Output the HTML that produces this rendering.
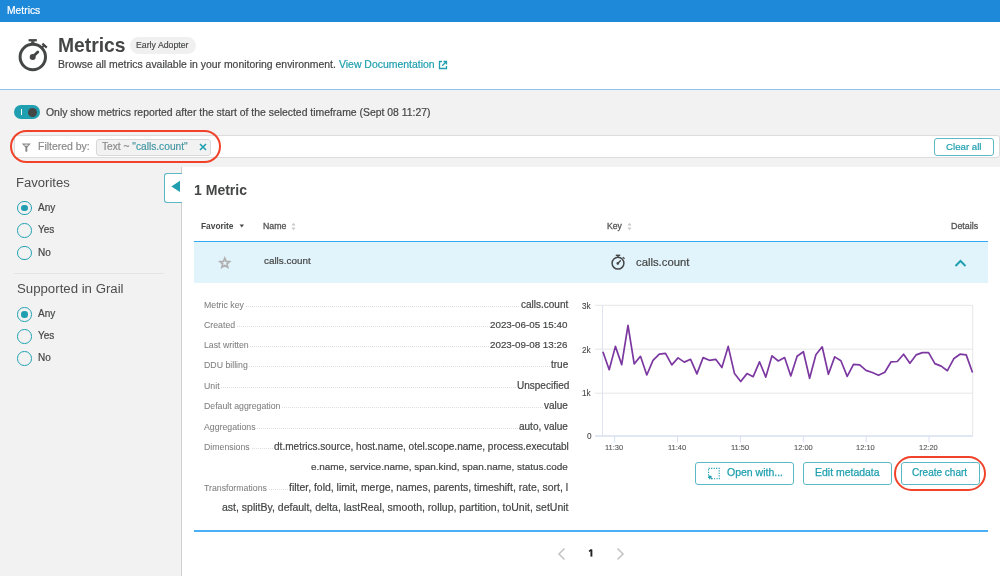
<!DOCTYPE html>
<html><head><meta charset="utf-8"><style>
html,body{margin:0;padding:0;width:1000px;height:576px;overflow:hidden;background:#f2f2f2;position:relative}
body{font-family:"Liberation Sans", sans-serif}
.t{position:absolute;white-space:nowrap;line-height:1;will-change:transform}
</style></head><body>
<div style="position:absolute;left:0px;top:0px;width:1000px;height:22.6px;background:#1e88d9"></div>
<div class="t" style="left:6.75px;top:6px;font-size:10.32px;color:#ffffff;font-weight:400;-webkit-text-stroke:0.2px #fff;">Metrics</div>
<div style="position:absolute;left:0px;top:22px;width:1000px;height:67px;background:#ffffff"></div>
<div style="position:absolute;left:0px;top:88.6px;width:1000px;height:1.2px;background:#8cc4ec"></div>
<svg style="position:absolute;left:0;top:0" width="60" height="80" viewBox="0 0 60 80">
<circle cx="32.8" cy="57" r="12.7" fill="none" stroke="#454646" stroke-width="3"/>
<rect x="28.6" y="39.1" width="8.2" height="2.3" fill="#454646"/>
<path d="M31.2 41.2 H34.4 V44.6 H31.2 Z" fill="#454646"/>
<line x1="42.4" y1="43.6" x2="46.8" y2="47.6" stroke="#454646" stroke-width="2.2"/>
<line x1="42" y1="47.6" x2="44.4" y2="45.2" stroke="#454646" stroke-width="2"/>
<line x1="32.8" y1="56.8" x2="37.8" y2="52" stroke="#454646" stroke-width="2.8" stroke-linecap="round"/>
<circle cx="32.7" cy="57" r="3" fill="#454646"/>
</svg>
<div class="t" style="left:57.50px;top:36px;font-size:19.3px;color:#454646;font-weight:700;">Metrics</div>
<div style="position:absolute;left:129.5px;top:36.5px;width:66.5px;height:17.3px;background:#f0f0f0;border-radius:9px"></div>
<div class="t" style="left:136.00px;top:41px;font-size:8.75px;color:#454646;font-weight:400;-webkit-text-stroke:0.15px #454646;">Early Adopter</div>
<div class="t" style="left:58.20px;top:60px;font-size:10.44px;color:#454646;font-weight:400;-webkit-text-stroke:0.2px #454646;">Browse all metrics available in your monitoring environment.</div>
<div class="t" style="left:338.70px;top:60px;font-size:10.46px;color:#1f9faf;font-weight:400;-webkit-text-stroke:0.2px #1f9faf;">View Documentation</div>
<svg style="position:absolute;left:437.5px;top:59.5px" width="10" height="10" viewBox="0 0 10 10">
<path d="M4 1.5 H1.5 V8.5 H8.5 V6" fill="none" stroke="#1f9faf" stroke-width="1.3"/>
<path d="M5.5 1.5 H8.5 V4.5 M8.5 1.5 L4.2 5.8" fill="none" stroke="#1f9faf" stroke-width="1.3"/>
</svg>
<div style="position:absolute;left:0px;top:89.8px;width:1000px;height:487px;background:#f2f2f2"></div>
<div style="position:absolute;left:14px;top:105px;width:26px;height:14px;background:#1f9faf;border-radius:7px"></div>
<div style="position:absolute;left:20.5px;top:108.5px;width:1px;height:6px;background:#ffffff"></div>
<div style="position:absolute;left:28.2px;top:107.6px;width:9px;height:9px;border-radius:50%;background:#454646"></div>
<div class="t" style="left:46.00px;top:108px;font-size:10.41px;color:#454646;font-weight:400;-webkit-text-stroke:0.2px #454646;">Only show metrics reported after the start of the selected timeframe (Sept 08 11:27)</div>
<div style="position:absolute;left:14px;top:135.3px;width:985.5px;height:23.2px;background:#fff;border:1px solid #dcdcdc;border-radius:3px;box-sizing:border-box"></div>
<svg style="position:absolute;left:21px;top:142.6px" width="11" height="10" viewBox="0 0 11 10">
<path d="M0.9 0.5 H9.8 L6.3 4.6 V8.6 Q5.3 9.1 4.4 8.6 V4.6 Z" fill="#858585"/><ellipse cx="5.3" cy="2.1" rx="2.3" ry="0.65" fill="#fff"/></svg>
<div class="t" style="left:38.20px;top:142px;font-size:10.46px;color:#8a8a8a;font-weight:400;-webkit-text-stroke:0.2px #8a8a8a;">Filtered by:</div>
<div style="position:absolute;left:95.5px;top:138.5px;width:115px;height:17px;background:#f2f2f2;border:1px solid #d9d9d9;border-radius:3px;box-sizing:border-box"></div>
<div class="t" style="left:102.00px;top:142px;font-size:10.2px;color:#8a8a8a;font-weight:400;-webkit-text-stroke:0.2px #8a8a8a;">Text ~ <span style="color:#1f9faf">"calls.count"</span></div>
<svg style="position:absolute;left:198.5px;top:143px" width="8" height="8" viewBox="0 0 8 8">
<path d="M1 1 L7 7 M7 1 L1 7" stroke="#1f9faf" stroke-width="1.6"/></svg>
<div style="position:absolute;left:934px;top:138.2px;width:59.5px;height:17.5px;background:#fff;border:1px solid #5db8c5;border-radius:3px;box-sizing:border-box"></div>
<div class="t" style="left:945.80px;top:142px;font-size:9.69px;color:#1f9faf;font-weight:400;-webkit-text-stroke:0.2px #1f9faf;">Clear all</div>
<div class="t" style="left:16.00px;top:176px;font-size:13.09px;color:#4d4d4d;font-weight:400;">Favorites</div>
<div style="position:absolute;left:17.4px;top:200.75px;width:14.5px;height:14.5px;border-radius:50%;border:1.75px solid #22a2b2;box-sizing:border-box"></div>
<div style="position:absolute;left:21.35px;top:204.70px;width:6.6px;height:6.6px;border-radius:50%;background:#1f9faf"></div>
<div class="t" style="left:38.10px;top:203px;font-size:10px;color:#454646;font-weight:400;-webkit-text-stroke:0.2px #454646;">Any</div>
<div style="position:absolute;left:17.4px;top:223.25px;width:14.5px;height:14.5px;border-radius:50%;border:1.75px solid #22a2b2;box-sizing:border-box"></div>
<div class="t" style="left:38.10px;top:225px;font-size:10px;color:#454646;font-weight:400;-webkit-text-stroke:0.2px #454646;">Yes</div>
<div style="position:absolute;left:17.4px;top:245.75px;width:14.5px;height:14.5px;border-radius:50%;border:1.75px solid #22a2b2;box-sizing:border-box"></div>
<div class="t" style="left:38.10px;top:248px;font-size:10px;color:#454646;font-weight:400;-webkit-text-stroke:0.2px #454646;">No</div>
<div style="position:absolute;left:14px;top:272.5px;width:150px;height:1px;background:#e4e4e4"></div>
<div class="t" style="left:17.00px;top:282px;font-size:13.22px;color:#4d4d4d;font-weight:400;">Supported in Grail</div>
<div style="position:absolute;left:17.4px;top:307.05px;width:14.5px;height:14.5px;border-radius:50%;border:1.75px solid #22a2b2;box-sizing:border-box"></div>
<div style="position:absolute;left:21.35px;top:311.00px;width:6.6px;height:6.6px;border-radius:50%;background:#1f9faf"></div>
<div class="t" style="left:38.10px;top:309px;font-size:10px;color:#454646;font-weight:400;-webkit-text-stroke:0.2px #454646;">Any</div>
<div style="position:absolute;left:17.4px;top:329.35px;width:14.5px;height:14.5px;border-radius:50%;border:1.75px solid #22a2b2;box-sizing:border-box"></div>
<div class="t" style="left:38.10px;top:331px;font-size:10px;color:#454646;font-weight:400;-webkit-text-stroke:0.2px #454646;">Yes</div>
<div style="position:absolute;left:17.4px;top:351.35px;width:14.5px;height:14.5px;border-radius:50%;border:1.75px solid #22a2b2;box-sizing:border-box"></div>
<div class="t" style="left:38.10px;top:353px;font-size:10px;color:#454646;font-weight:400;-webkit-text-stroke:0.2px #454646;">No</div>
<div style="position:absolute;left:181px;top:167px;width:819px;height:409px;background:#fff;border-left:1px solid #d0d0d0;box-sizing:border-box"></div>
<div style="position:absolute;left:164.3px;top:173px;width:18px;height:29.7px;background:#fff;border:1px solid #5db8c5;border-right:none;border-radius:3px 0 0 3px;box-sizing:border-box"></div>
<svg style="position:absolute;left:170px;top:180px" width="12" height="13" viewBox="0 0 12 13">
<path d="M1.4 6.4 L10 0.8 V12 Z" fill="#1f9faf"/></svg>
<div class="t" style="left:193.50px;top:183px;font-size:14.04px;color:#454646;font-weight:700;">1 Metric</div>
<div class="t" style="left:201.20px;top:222px;font-size:8.36px;color:#454646;font-weight:700;">Favorite</div>
<svg style="position:absolute;left:239px;top:224px" width="6" height="5" viewBox="0 0 6 5"><path d="M0.6 0.6 H5 L2.8 3.5 Z" fill="#454646"/></svg>
<div class="t" style="left:262.50px;top:222px;font-size:8.77px;color:#555555;font-weight:400;-webkit-text-stroke:0.3px #555555;">Name</div>
<svg style="position:absolute;left:291px;top:221.5px" width="5" height="9" viewBox="0 0 5 9"><path d="M0.5 3.6 L2.5 0.8 L4.5 3.6 Z M0.5 5.4 L2.5 8.2 L4.5 5.4 Z" fill="#c8c8c8"/></svg>
<div class="t" style="left:606.90px;top:222px;font-size:8.6px;color:#555555;font-weight:400;-webkit-text-stroke:0.3px #555555;">Key</div>
<svg style="position:absolute;left:626.5px;top:221.5px" width="5" height="9" viewBox="0 0 5 9"><path d="M0.5 3.6 L2.5 0.8 L4.5 3.6 Z M0.5 5.4 L2.5 8.2 L4.5 5.4 Z" fill="#c8c8c8"/></svg>
<div class="t" style="left:950.60px;top:222px;font-size:8.9px;color:#555555;font-weight:400;-webkit-text-stroke:0.3px #555555;">Details</div>
<div style="position:absolute;left:193.5px;top:240.6px;width:794.5px;height:1.7px;background:#33a9f3"></div>
<div style="position:absolute;left:193.5px;top:242.3px;width:794.5px;height:40.5px;background:#e1f3fb"></div>
<svg style="position:absolute;left:0;top:0" width="300" height="300" viewBox="0 0 300 300"><polygon points="224.80,258.20 226.15,261.34 229.56,261.65 226.99,263.91 227.74,267.25 224.80,265.50 221.86,267.25 222.61,263.91 220.04,261.65 223.45,261.34" fill="none" stroke="#b0b0b0" stroke-width="1.7" stroke-linejoin="miter"/></svg>
<div class="t" style="left:263.80px;top:256px;font-size:9.88px;color:#454646;font-weight:400;-webkit-text-stroke:0.2px #454646;">calls.count</div>
<svg style="position:absolute;left:609px;top:252px" width="18" height="20" viewBox="0 0 18 20">
<circle cx="9" cy="11.2" r="5.9" fill="none" stroke="#454646" stroke-width="1.5"/>
<rect x="6.8" y="2.6" width="4.4" height="1.4" fill="#454646"/>
<rect x="8.3" y="3.4" width="1.4" height="2.2" fill="#454646"/>
<line x1="13.8" y1="5.2" x2="15.6" y2="6.8" stroke="#454646" stroke-width="1.2"/>
<line x1="8.8" y1="11.4" x2="11.4" y2="8.8" stroke="#454646" stroke-width="1.4" stroke-linecap="round"/>
<circle cx="8.8" cy="11.4" r="1.3" fill="#454646"/>
</svg>
<div class="t" style="left:635.60px;top:257px;font-size:11.3px;color:#454646;font-weight:400;-webkit-text-stroke:0.2px #454646;">calls.count</div>
<svg style="position:absolute;left:954px;top:257.5px" width="13" height="10" viewBox="0 0 13 10">
<path d="M1.5 8 L6.5 3 L11.5 8" fill="none" stroke="#1f9faf" stroke-width="2"/></svg>
<div class="t" style="left:204.00px;top:301px;font-size:8.75px;color:#7f7f7f;font-weight:400;-webkit-text-stroke:0.05px #7f7f7f;">Metric key</div>
<div class="t" style="left:520.83px;top:300px;font-size:10px;color:#454646;font-weight:400;-webkit-text-stroke:0.2px #454646;">calls.count</div>
<div style="position:absolute;left:245.7px;top:306px;width:274.3px;height:1px;background-image:linear-gradient(90deg,#dedede 50%,transparent 50%);background-size:2px 1px"></div>
<div class="t" style="left:204.00px;top:321px;font-size:8.75px;color:#7f7f7f;font-weight:400;-webkit-text-stroke:0.05px #7f7f7f;">Created</div>
<div class="t" style="left:490.40px;top:320px;font-size:9.81px;color:#454646;font-weight:400;-webkit-text-stroke:0.2px #454646;">2023-06-05 15:40</div>
<div style="position:absolute;left:236.5px;top:326px;width:253.1px;height:1px;background-image:linear-gradient(90deg,#dedede 50%,transparent 50%);background-size:2px 1px"></div>
<div class="t" style="left:204.00px;top:341px;font-size:8.75px;color:#7f7f7f;font-weight:400;-webkit-text-stroke:0.05px #7f7f7f;">Last written</div>
<div class="t" style="left:490.40px;top:340px;font-size:9.81px;color:#454646;font-weight:400;-webkit-text-stroke:0.2px #454646;">2023-09-08 13:26</div>
<div style="position:absolute;left:250.1px;top:346px;width:239.5px;height:1px;background-image:linear-gradient(90deg,#dedede 50%,transparent 50%);background-size:2px 1px"></div>
<div class="t" style="left:204.00px;top:361px;font-size:8.75px;color:#7f7f7f;font-weight:400;-webkit-text-stroke:0.05px #7f7f7f;">DDU billing</div>
<div class="t" style="left:550.63px;top:360px;font-size:10px;color:#454646;font-weight:400;-webkit-text-stroke:0.2px #454646;">true</div>
<div style="position:absolute;left:249.1px;top:366px;width:300.7px;height:1px;background-image:linear-gradient(90deg,#dedede 50%,transparent 50%);background-size:2px 1px"></div>
<div class="t" style="left:204.00px;top:382px;font-size:8.75px;color:#7f7f7f;font-weight:400;-webkit-text-stroke:0.05px #7f7f7f;">Unit</div>
<div class="t" style="left:516.61px;top:381px;font-size:10px;color:#454646;font-weight:400;-webkit-text-stroke:0.2px #454646;">Unspecified</div>
<div style="position:absolute;left:221.3px;top:387px;width:294.5px;height:1px;background-image:linear-gradient(90deg,#dedede 50%,transparent 50%);background-size:2px 1px"></div>
<div class="t" style="left:204.00px;top:402px;font-size:8.75px;color:#7f7f7f;font-weight:400;-webkit-text-stroke:0.05px #7f7f7f;">Default aggregation</div>
<div class="t" style="left:543.96px;top:401px;font-size:10px;color:#454646;font-weight:400;-webkit-text-stroke:0.2px #454646;">value</div>
<div style="position:absolute;left:281.7px;top:407px;width:261.4px;height:1px;background-image:linear-gradient(90deg,#dedede 50%,transparent 50%);background-size:2px 1px"></div>
<div class="t" style="left:204.00px;top:423px;font-size:8.75px;color:#7f7f7f;font-weight:400;-webkit-text-stroke:0.05px #7f7f7f;">Aggregations</div>
<div class="t" style="left:518.94px;top:422px;font-size:10px;color:#454646;font-weight:400;-webkit-text-stroke:0.2px #454646;">auto, value</div>
<div style="position:absolute;left:257.4px;top:428px;width:260.7px;height:1px;background-image:linear-gradient(90deg,#dedede 50%,transparent 50%);background-size:2px 1px"></div>
<div class="t" style="left:204.00px;top:443px;font-size:8.75px;color:#7f7f7f;font-weight:400;-webkit-text-stroke:0.05px #7f7f7f;">Dimensions</div>
<div class="t" style="left:273.60px;top:442px;font-size:10.05px;color:#454646;font-weight:400;-webkit-text-stroke:0.2px #454646;">dt.metrics.source, host.name, otel.scope.name, process.executabl</div>
<div class="t" style="left:310.60px;top:462px;font-size:9.95px;color:#454646;font-weight:400;-webkit-text-stroke:0.2px #454646;">e.name, service.name, span.kind, span.name, status.code</div>
<div style="position:absolute;left:251.5px;top:448px;width:21.3px;height:1px;background-image:linear-gradient(90deg,#dedede 50%,transparent 50%);background-size:2px 1px"></div>
<div class="t" style="left:204.00px;top:484px;font-size:8.75px;color:#7f7f7f;font-weight:400;-webkit-text-stroke:0.05px #7f7f7f;">Transformations</div>
<div class="t" style="left:289.40px;top:483px;font-size:10.44px;color:#454646;font-weight:400;-webkit-text-stroke:0.2px #454646;">filter, fold, limit, merge, names, parents, timeshift, rate, sort, l</div>
<div class="t" style="left:221.60px;top:502px;font-size:10.5px;color:#454646;font-weight:400;-webkit-text-stroke:0.2px #454646;">ast, splitBy, default, delta, lastReal, smooth, rollup, partition, toUnit, setUnit</div>
<div style="position:absolute;left:268.7px;top:489px;width:19.9px;height:1px;background-image:linear-gradient(90deg,#dedede 50%,transparent 50%);background-size:2px 1px"></div>
<svg style="position:absolute;left:0;top:0" width="1000" height="576" viewBox="0 0 1000 576"><line x1="595" y1="305.3" x2="973" y2="305.3" stroke="#e6e6e6" stroke-width="1"/><line x1="595" y1="349.2" x2="973" y2="349.2" stroke="#e6e6e6" stroke-width="1"/><line x1="595" y1="393.2" x2="973" y2="393.2" stroke="#e6e6e6" stroke-width="1"/><line x1="972.7" y1="305" x2="972.7" y2="436" stroke="#e6e6e6" stroke-width="1"/><line x1="602.5" y1="305" x2="602.5" y2="436" stroke="#dde3f0" stroke-width="1"/><line x1="595" y1="436" x2="973" y2="436" stroke="#d7e0f0" stroke-width="1.5"/><line x1="614.6" y1="436" x2="614.6" y2="442.5" stroke="#d7e0f0" stroke-width="1"/><line x1="677.5" y1="436" x2="677.5" y2="442.5" stroke="#d7e0f0" stroke-width="1"/><line x1="740.4" y1="436" x2="740.4" y2="442.5" stroke="#d7e0f0" stroke-width="1"/><line x1="803.3" y1="436" x2="803.3" y2="442.5" stroke="#d7e0f0" stroke-width="1"/><line x1="866.2" y1="436" x2="866.2" y2="442.5" stroke="#d7e0f0" stroke-width="1"/><line x1="929.1" y1="436" x2="929.1" y2="442.5" stroke="#d7e0f0" stroke-width="1"/><polyline points="602.9,351.7 609.2,369.7 615.4,346.4 621.7,364.6 628.0,325.3 634.2,363.9 640.5,356.3 646.8,375.0 653.0,360.3 659.3,354.2 665.5,353.3 671.8,364.9 678.1,357.9 684.3,362.1 690.6,359.3 696.9,373.9 703.1,357.6 709.4,360.3 715.7,359.3 721.9,367.6 728.2,346.4 734.5,373.6 740.7,381.5 747.0,373.6 753.2,376.7 759.5,361.8 765.8,377.1 772.0,355.8 778.3,361.0 784.6,357.6 790.8,376.0 797.1,356.3 803.4,351.7 809.6,378.3 815.9,354.7 822.2,346.8 828.4,374.3 834.7,356.9 840.9,360.7 847.2,376.4 853.5,364.4 859.7,364.9 866.0,370.4 872.3,372.5 878.5,375.3 884.8,372.2 891.1,361.8 897.3,361.5 903.6,354.2 909.9,363.3 916.1,354.9 922.4,352.6 928.6,352.6 934.9,363.6 941.2,366.1 947.4,370.7 953.7,358.8 960.0,354.2 966.2,354.9 972.5,372.5" fill="none" stroke="#7c38a1" stroke-width="1.7" stroke-linejoin="round"/></svg>
<div class="t" style="left:581.95px;top:303px;font-size:8.2px;color:#454646;font-weight:400;-webkit-text-stroke:0.1px #454646;">3k</div>
<div class="t" style="left:581.95px;top:347px;font-size:8.2px;color:#454646;font-weight:400;-webkit-text-stroke:0.1px #454646;">2k</div>
<div class="t" style="left:581.95px;top:390px;font-size:8.2px;color:#454646;font-weight:400;-webkit-text-stroke:0.1px #454646;">1k</div>
<div class="t" style="left:586.50px;top:433px;font-size:8.2px;color:#454646;font-weight:400;-webkit-text-stroke:0.1px #454646;">0</div>
<div class="t" style="left:605.08px;top:444px;font-size:7.5px;color:#555555;font-weight:400;-webkit-text-stroke:0.1px #555555;">11:30</div>
<div class="t" style="left:667.98px;top:444px;font-size:7.5px;color:#555555;font-weight:400;-webkit-text-stroke:0.1px #555555;">11:40</div>
<div class="t" style="left:730.88px;top:444px;font-size:7.5px;color:#555555;font-weight:400;-webkit-text-stroke:0.1px #555555;">11:50</div>
<div class="t" style="left:793.50px;top:444px;font-size:7.5px;color:#555555;font-weight:400;-webkit-text-stroke:0.1px #555555;">12:00</div>
<div class="t" style="left:856.40px;top:444px;font-size:7.5px;color:#555555;font-weight:400;-webkit-text-stroke:0.1px #555555;">12:10</div>
<div class="t" style="left:919.30px;top:444px;font-size:7.5px;color:#555555;font-weight:400;-webkit-text-stroke:0.1px #555555;">12:20</div>
<div style="position:absolute;left:695px;top:462px;width:99px;height:23px;background:#fff;border:1px solid #5db8c5;border-radius:3px;box-sizing:border-box"></div>
<div class="t" style="left:727.20px;top:467px;font-size:10.51px;color:#1f9faf;font-weight:400;-webkit-text-stroke:0.25px #1f9faf;">Open with...</div>
<svg style="position:absolute;left:705px;top:465px" width="18" height="16" viewBox="0 0 18 16">
<rect x="3.6" y="3.4" width="10.6" height="10.4" fill="none" stroke="#1f9faf" stroke-width="1.1" stroke-dasharray="1.2 1.3"/>
<path d="M3.4 10.2 L7.2 11.2 L6 12 L7.6 13.6 L6.6 14.4 L5 12.8 L4.2 14 Z" fill="#1f9faf"/></svg>
<div style="position:absolute;left:803px;top:462px;width:89px;height:23px;background:#fff;border:1px solid #5db8c5;border-radius:3px;box-sizing:border-box"></div>
<div class="t" style="left:814.60px;top:468px;font-size:10.48px;color:#1f9faf;font-weight:400;-webkit-text-stroke:0.25px #1f9faf;">Edit metadata</div>
<div style="position:absolute;left:900.5px;top:462px;width:79px;height:23px;background:#fff;border:1px solid #5db8c5;border-radius:3px;box-sizing:border-box"></div>
<div class="t" style="left:912.00px;top:468px;font-size:10.03px;color:#1f9faf;font-weight:400;-webkit-text-stroke:0.25px #1f9faf;">Create chart</div>
<div style="position:absolute;left:193.5px;top:530px;width:794.5px;height:1.8px;background:#4aaff4"></div>
<svg style="position:absolute;left:555px;top:546px" width="72" height="16" viewBox="0 0 72 16">
<path d="M9.5 2.5 L4 8 L9.5 13.5" fill="none" stroke="#c4c4c4" stroke-width="1.6"/>
<path d="M62.5 2.5 L68 8 L62.5 13.5" fill="none" stroke="#c4c4c4" stroke-width="1.6"/></svg>
<svg style="position:absolute;left:586px;top:548px" width="10" height="10" viewBox="0 0 10 10"><path d="M5.4 1.6 V8.6" stroke="#222" stroke-width="1.9"/><path d="M3 3.4 L5.6 1.6" stroke="#222" stroke-width="1.6"/></svg>
<div style="position:absolute;left:9.6px;top:129.6px;width:211.2px;height:33.2px;border:2.2px solid #f0432a;border-radius:16.6px;box-sizing:border-box"></div>
<div style="position:absolute;left:894px;top:456px;width:91.6px;height:35px;border:2.2px solid #f0432a;border-radius:17.5px;box-sizing:border-box"></div>
</body></html>
